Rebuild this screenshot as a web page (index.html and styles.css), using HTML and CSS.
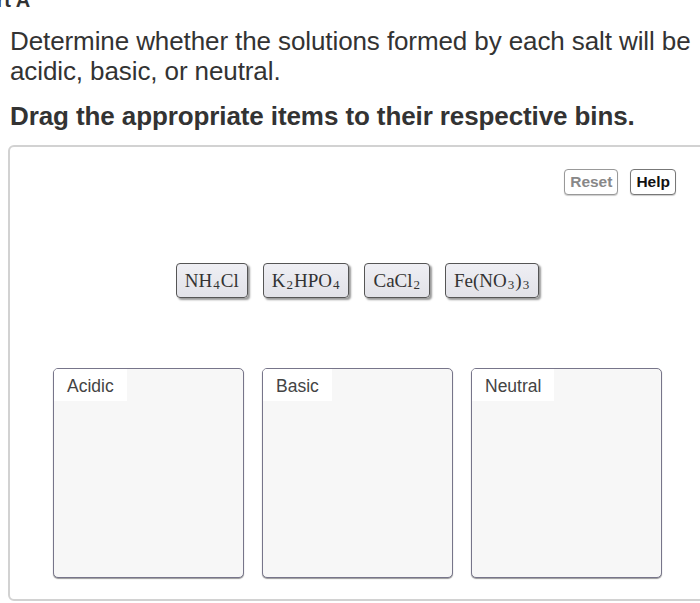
FILE: index.html
```html
<!DOCTYPE html>
<html>
<head>
<meta charset="utf-8">
<link rel="stylesheet" href="styles.css">
</head>
<body>
<div class="page">
  <div class="part-title">Part A</div>
  <p class="prompt">Determine whether the solutions formed by each salt will be acidic, basic, or neutral.</p>
  <p class="instruction">Drag the appropriate items to their respective bins.</p>
  <div class="panel">
    <div class="toolbar">
      <button class="btn btn-reset">Reset</button>
      <button class="btn btn-help">Help</button>
    </div>
    <div class="chips">
      <div class="chip">NH<sub>4</sub>Cl</div>
      <div class="chip">K<sub>2</sub>HPO<sub>4</sub></div>
      <div class="chip">CaCl<sub>2</sub></div>
      <div class="chip">Fe(NO<sub>3</sub>)<sub>3</sub></div>
    </div>
    <div class="bins">
      <div class="bin"><div class="bin-label">Acidic</div></div>
      <div class="bin"><div class="bin-label">Basic</div></div>
      <div class="bin"><div class="bin-label">Neutral</div></div>
    </div>
  </div>
</div>
</body>
</html>
```

FILE: styles.css
```css
html, body {
  margin: 0;
  padding: 0;
  background: #fff;
  overflow: hidden;
}
body {
  width: 700px;
  height: 603px;
  font-family: "Liberation Sans", Arial, sans-serif;
  color: #333;
}
.page {
  width: 700px;
}
.part-title {
  font-weight: bold;
  font-size: 20px;
  line-height: 20px;
  height: 20px;
  margin: -10px 0 0 -28px;
  color: #333;
}
.prompt {
  margin: 16px 0 0 10px;
  font-size: 26px;
  line-height: 30px;
  width: 690px;
  letter-spacing: -0.1px;
}
.instruction {
  margin: 15px 0 0 10px;
  font-size: 26px;
  line-height: 30px;
  font-weight: bold;
  letter-spacing: -0.1px;
}
.panel {
  margin: 14px 0 0 8px;
  width: 720px;
  height: 452px;
  border: 2px solid #d2d2d2;
  border-radius: 6px;
  box-sizing: content-box;
}
.toolbar {
  width: 666px;
  display: flex;
  justify-content: flex-end;
  gap: 12px;
  margin-top: 22px;
}
.btn {
  height: 26px;
  border: 1.5px solid #999;
  border-radius: 4px;
  background: #fff;
  font-family: "Liberation Sans", Arial, sans-serif;
  font-weight: bold;
  font-size: 15.5px;
  padding: 0 5px;
  box-shadow: 0 1px 1px #ccc;
}
.btn-reset {
  color: #888;
}
.btn-help {
  color: #111;
  border-color: #777;
}
.chips {
  margin: 68px 0 0 43px;
  width: 609px;
  display: flex;
  justify-content: center;
  gap: 15px;
}
.chip {
  height: 33px;
  line-height: 33px;
  padding: 0 8px;
  border: 1px solid #555;
  border-radius: 4px;
  background: linear-gradient(#efeff4, #e2e2e8);
  box-shadow: 2px 2px 2px #999;
  font-family: "Liberation Serif", "DejaVu Serif", serif;
  font-size: 19px;
  color: #333;
}
.chip sub {
  font-size: 13px;
  vertical-align: -2px;
  line-height: 0;
  margin: 0 1px;
}
.bins {
  margin: 70px 0 0 43px;
  display: grid;
  grid-template-columns: 191px 191px 191px;
  gap: 18px;
}
.bin {
  height: 208px;
  border: 1.5px solid #77758a;
  border-radius: 5px;
  background: #f7f7f7;
  box-shadow: 0 1px 1px #999;
}
.bin-label {
  display: inline-block;
  background: #fff;
  font-size: 17.5px;
  line-height: 30px;
  padding: 2px 13px 0;
  color: #444;
  border-top-left-radius: 4px;
}
```
